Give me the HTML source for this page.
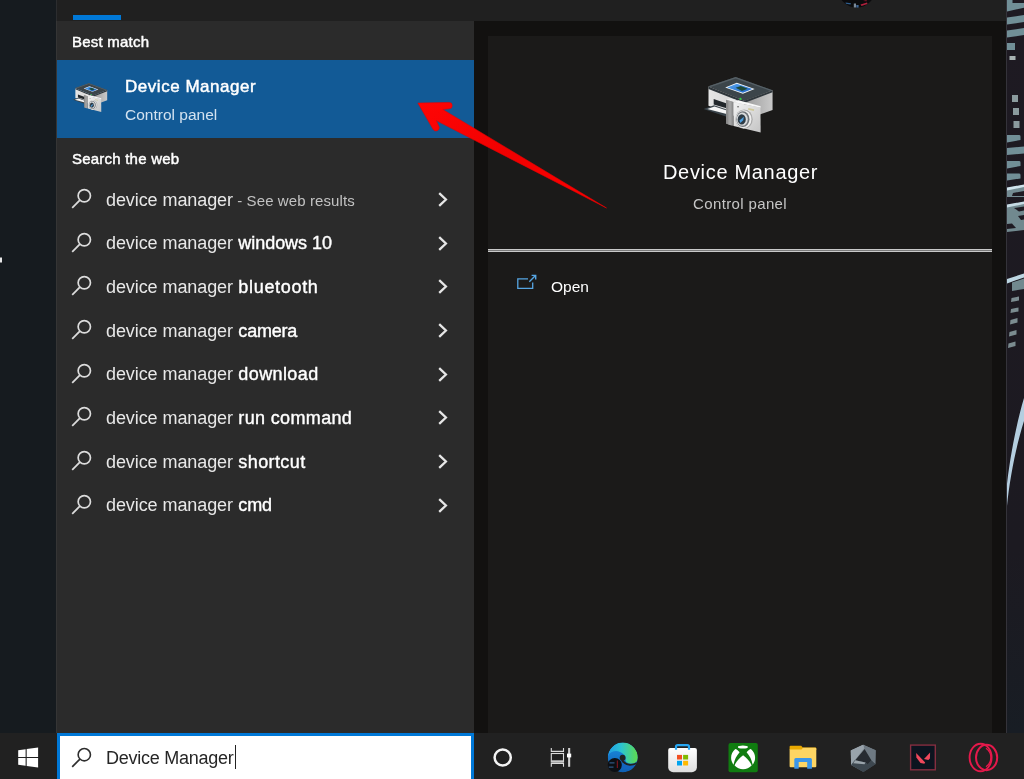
<!DOCTYPE html>
<html lang="en">
<head>
<meta charset="utf-8">
<title>Device Manager - Search</title>
<style>
html,body{margin:0;padding:0;}
body{width:1024px;height:779px;overflow:hidden;position:relative;background:#161b1f;font-family:"Liberation Sans",sans-serif;color:#fff;}
.abs{position:absolute;}
#topstrip{left:56px;top:0;width:950px;height:21px;background:#202020;border-left:1px solid #2c2d2f;box-sizing:border-box;}
#tab{left:72.5px;top:15px;width:48.5px;height:5.4px;background:#0078d7;}
#leftpanel{left:56px;top:21px;width:418px;height:712px;background:#2b2b2b;border-left:1px solid #353535;box-sizing:border-box;}
#gap{left:474px;top:21px;width:532px;height:712px;background:#121110;}
#rightpanel{left:488px;top:36px;width:504px;height:697px;background:#1b1a19;}
#selrow{left:57px;top:60px;width:417px;height:78px;background:#125a96;}
.t{position:absolute;white-space:nowrap;line-height:1;will-change:transform;}
.hdr{font-weight:normal;font-size:15px;color:#fff;-webkit-text-stroke:.45px #fff;letter-spacing:.22px;}
.row{font-size:18px;color:#e8e8e8;}
.row .rg{letter-spacing:-.08px;}
.row b{color:#fff;font-weight:normal;-webkit-text-stroke:.4px #fff;}
.sub{font-size:15px;color:#c2c2c2;letter-spacing:.1px;}
#taskbar{left:0;top:733px;width:1024px;height:46px;background:#212121;}
#searchbox{left:57px;top:733px;width:411px;height:46px;border:3px solid #0078d7;border-bottom:none;background:#fff;}
#divider{left:488px;top:249px;width:504px;height:1px;background:#7a7a7a;border-top:1px solid #c9c9c9;border-bottom:1px solid #c9c9c9;}
svg{position:absolute;overflow:visible;}
</style>
</head>
<body>
<svg id="wall" style="left:0;top:0" width="1024" height="779" viewBox="0 0 1024 779">
<defs><linearGradient id="wg" x1="0" y1="0" x2="0" y2="1"><stop offset="0" stop-color="#1e1a22"/><stop offset=".75" stop-color="#1c1a21"/><stop offset="1" stop-color="#181d24"/></linearGradient></defs>
<rect x="1006" y="0" width="18" height="733" fill="url(#wg)"/>
<rect x="1006" y="0" width="1" height="733" fill="#34333a"/>
<rect x="0" y="257.5" width="2" height="5" fill="#e8e8e8"/>
<g fill="#718f97">
<path d="M1007 0H1012.500V3H1024V7.700L1007 11.500Z"/>
<path d="M1007 17.5L1024 15V22L1007 24.5Z"/>
<path d="M1007 30.5L1024 28V35L1007 37.5Z"/>
<rect x="1007" y="43" width="8" height="7"/>
<rect x="1009.5" y="56" width="6" height="4" fill="#a9b3b3"/>
<rect x="1012" y="95" width="6" height="7" fill="#8b9b9e"/>
<rect x="1013" y="108" width="6" height="7" fill="#8b9b9e"/>
<rect x="1013.5" y="121" width="6" height="7" fill="#8b9b9e"/>
<path d="M1007 135H1019a1.5 1.5 0 0 1 1.5 1.5V140L1007 142.5Z"/>
<path d="M1007 148L1024 146.5V153.5L1007 155Z"/>
<path d="M1007 161H1019a1.5 1.5 0 0 1 1.5 1.5V166L1007 168.5Z"/>
<path d="M1007 173.5H1019a1.5 1.5 0 0 1 1.5 1.5V178.5L1007 180.5Z"/>
<path d="M1007 188L1024 185V197H1007Z" fill="#748c93"/>
<path d="M1007 187.5L1024 184.5V187L1007 190.5Z" fill="#cfe3ec"/>
<path d="M1013 193L1024 191V196H1012Z" fill="#1e1a22"/>
<path d="M1007 205L1024 202V230L1007 232Z" fill="#71898f"/>
<path d="M1007 204.5L1024 201.5V204L1007 207.5Z" fill="#c5dbe4"/>
<path d="M1014 208L1024 206.5V210.5L1019 211.5Z" fill="#1e1a22"/>
<path d="M1018 216L1024 215V219.5L1021 220Z" fill="#1e1a22"/>
<path d="M1007 224L1012 223.5L1016 228L1007 229Z" fill="#1e1a22"/>
<path d="M1007 279L1024 273.5V277.5L1007 283.5Z" fill="#bcd6e2"/>
<path d="M1012 282.5L1024 278.5V289L1012 291Z" fill="#71898f"/>
<path d="M1011.5 298L1019 296.5V300.5L1011 302Z" fill="#7b8c90"/>
<path d="M1011 309L1018.500 307.500V311.500L1010.500 313Z" fill="#7b8c90"/>
<path d="M1010.500 320L1017.500 318V322.500L1010 324.500Z" fill="#7b8c90"/>
<path d="M1009.500 332L1016.500 330V334.500L1009 336.500Z" fill="#7b8c90"/>
<path d="M1008.500 343.500L1015.500 341.500V346L1008 348Z" fill="#7b8c90"/>
<path d="M1024 398C1018 418 1011 450 1007 484V506C1009.500 480 1016 446 1024 421Z" fill="#b4cee0"/>
</g>

</svg>

<div class="abs" id="topstrip"></div>
<div class="abs" id="tab"></div>
<div class="abs" id="leftpanel"></div>
<div class="abs" id="gap"></div>
<div class="abs" id="rightpanel"></div>
<div class="abs" id="selrow"></div>
<div class="abs" id="divider"></div>

<div class="t hdr" id="t_best" style="left:72px;top:34.4px;">Best match</div>
<div class="t" id="t_dm" style="left:125px;top:77.5px;font-size:17px;-webkit-text-stroke:.45px #fff;letter-spacing:.53px;">Device Manager</div>
<div class="t" id="t_cp" style="left:125px;top:107px;font-size:15.5px;color:#d3e2f0;">Control panel</div>
<div class="t hdr" id="t_web" style="left:72px;top:150.5px;">Search the web</div>

<div class="t row" id="r1" style="left:106px;top:190.6px;"><span class="rg">device manager</span><span class="sub"> - See web results</span></div>
<svg style="left:70px;top:186.0px" width="24" height="24" viewBox="0 0 24 24"><circle cx="14.3" cy="9.75" r="6.15" fill="none" stroke="#dcdcdc" stroke-width="1.7"/><path d="M9.9 14.1 L2.2 21.8" stroke="#dcdcdc" stroke-width="1.8" fill="none"/></svg>
<svg style="left:436px;top:190.0px" width="14" height="18" viewBox="0 0 14 18"><path d="M3.2 3.2 L9.9 9.5 L3.2 15.8" stroke="#e6e6e6" stroke-width="2.3" fill="none"/></svg>
<div class="t row" id="r2" style="left:106px;top:233.6px;"><span class="rg">device manager</span> <b style="letter-spacing:-0.05px;margin-left:.35px">windows 10</b></div>
<svg style="left:70px;top:229.7px" width="24" height="24" viewBox="0 0 24 24"><circle cx="14.3" cy="9.75" r="6.15" fill="none" stroke="#dcdcdc" stroke-width="1.7"/><path d="M9.9 14.1 L2.2 21.8" stroke="#dcdcdc" stroke-width="1.8" fill="none"/></svg>
<svg style="left:436px;top:233.7px" width="14" height="18" viewBox="0 0 14 18"><path d="M3.2 3.2 L9.9 9.5 L3.2 15.8" stroke="#e6e6e6" stroke-width="2.3" fill="none"/></svg>
<div class="t row" id="r3" style="left:106px;top:277.6px;"><span class="rg">device manager</span> <b style="letter-spacing:0.68px;margin-left:.35px">bluetooth</b></div>
<svg style="left:70px;top:273.4px" width="24" height="24" viewBox="0 0 24 24"><circle cx="14.3" cy="9.75" r="6.15" fill="none" stroke="#dcdcdc" stroke-width="1.7"/><path d="M9.9 14.1 L2.2 21.8" stroke="#dcdcdc" stroke-width="1.8" fill="none"/></svg>
<svg style="left:436px;top:277.4px" width="14" height="18" viewBox="0 0 14 18"><path d="M3.2 3.2 L9.9 9.5 L3.2 15.8" stroke="#e6e6e6" stroke-width="2.3" fill="none"/></svg>
<div class="t row" id="r4" style="left:106px;top:321.6px;"><span class="rg">device manager</span> <b style="letter-spacing:-0.2px;margin-left:.35px">camera</b></div>
<svg style="left:70px;top:317.0px" width="24" height="24" viewBox="0 0 24 24"><circle cx="14.3" cy="9.75" r="6.15" fill="none" stroke="#dcdcdc" stroke-width="1.7"/><path d="M9.9 14.1 L2.2 21.8" stroke="#dcdcdc" stroke-width="1.8" fill="none"/></svg>
<svg style="left:436px;top:321.0px" width="14" height="18" viewBox="0 0 14 18"><path d="M3.2 3.2 L9.9 9.5 L3.2 15.8" stroke="#e6e6e6" stroke-width="2.3" fill="none"/></svg>
<div class="t row" id="r5" style="left:106px;top:364.6px;"><span class="rg">device manager</span> <b style="letter-spacing:0.4px;margin-left:.35px">download</b></div>
<svg style="left:70px;top:360.7px" width="24" height="24" viewBox="0 0 24 24"><circle cx="14.3" cy="9.75" r="6.15" fill="none" stroke="#dcdcdc" stroke-width="1.7"/><path d="M9.9 14.1 L2.2 21.8" stroke="#dcdcdc" stroke-width="1.8" fill="none"/></svg>
<svg style="left:436px;top:364.7px" width="14" height="18" viewBox="0 0 14 18"><path d="M3.2 3.2 L9.9 9.5 L3.2 15.8" stroke="#e6e6e6" stroke-width="2.3" fill="none"/></svg>
<div class="t row" id="r6" style="left:106px;top:408.6px;"><span class="rg">device manager</span> <b style="letter-spacing:0.35px;margin-left:.35px">run command</b></div>
<svg style="left:70px;top:404.4px" width="24" height="24" viewBox="0 0 24 24"><circle cx="14.3" cy="9.75" r="6.15" fill="none" stroke="#dcdcdc" stroke-width="1.7"/><path d="M9.9 14.1 L2.2 21.8" stroke="#dcdcdc" stroke-width="1.8" fill="none"/></svg>
<svg style="left:436px;top:408.4px" width="14" height="18" viewBox="0 0 14 18"><path d="M3.2 3.2 L9.9 9.5 L3.2 15.8" stroke="#e6e6e6" stroke-width="2.3" fill="none"/></svg>
<div class="t row" id="r7" style="left:106px;top:452.6px;"><span class="rg">device manager</span> <b style="letter-spacing:0.4px;margin-left:.35px">shortcut</b></div>
<svg style="left:70px;top:448.1px" width="24" height="24" viewBox="0 0 24 24"><circle cx="14.3" cy="9.75" r="6.15" fill="none" stroke="#dcdcdc" stroke-width="1.7"/><path d="M9.9 14.1 L2.2 21.8" stroke="#dcdcdc" stroke-width="1.8" fill="none"/></svg>
<svg style="left:436px;top:452.1px" width="14" height="18" viewBox="0 0 14 18"><path d="M3.2 3.2 L9.9 9.5 L3.2 15.8" stroke="#e6e6e6" stroke-width="2.3" fill="none"/></svg>
<div class="t row" id="r8" style="left:106px;top:495.6px;"><span class="rg">device manager</span> <b style="letter-spacing:-0.1px;margin-left:.35px">cmd</b></div>
<svg style="left:70px;top:491.8px" width="24" height="24" viewBox="0 0 24 24"><circle cx="14.3" cy="9.75" r="6.15" fill="none" stroke="#dcdcdc" stroke-width="1.7"/><path d="M9.9 14.1 L2.2 21.8" stroke="#dcdcdc" stroke-width="1.8" fill="none"/></svg>
<svg style="left:436px;top:495.8px" width="14" height="18" viewBox="0 0 14 18"><path d="M3.2 3.2 L9.9 9.5 L3.2 15.8" stroke="#e6e6e6" stroke-width="2.3" fill="none"/></svg>

<div class="t" id="t_dm2" style="left:662.8px;top:162px;font-size:20px;color:#fff;letter-spacing:.68px;">Device Manager</div>
<div class="t" id="t_cp2" style="left:693px;top:196px;font-size:15px;color:#c6c6c6;letter-spacing:.37px;">Control panel</div>
<div class="t" id="t_open" style="left:551px;top:278.8px;font-size:15.5px;color:#fff;">Open</div>

<svg id="ov" style="left:0;top:0;z-index:5" width="1024" height="779" viewBox="0 0 1024 779">
<defs>
<linearGradient id="ar" x1="0" y1="0" x2="1" y2="1"><stop offset="0" stop-color="#ff0505"/><stop offset=".5" stop-color="#f00000"/><stop offset="1" stop-color="#ff0000"/></linearGradient>
<linearGradient id="pr" x1="0" y1="0" x2="1" y2="0"><stop offset="0" stop-color="#9a9a9a"/><stop offset="1" stop-color="#c9c9c9"/></linearGradient>
<linearGradient id="pl" x1="0" y1="0" x2="1" y2="0"><stop offset="0" stop-color="#e6e6e6"/><stop offset="1" stop-color="#cfcfcf"/></linearGradient>
<linearGradient id="cb" x1="0" y1="0" x2="1" y2="1"><stop offset="0" stop-color="#f2f2f2"/><stop offset="1" stop-color="#c4c4c4"/></linearGradient>
<linearGradient id="ph" x1="0" y1="0" x2="1" y2="1"><stop offset="0" stop-color="#58a6f0"/><stop offset="1" stop-color="#1c62c4"/></linearGradient>
<g id="dmicon">
<path d="M160 228L395 147L715 262L470 352Z" fill="#3c454a"/>
<path d="M160 228L395 147L715 262L700 268L395 160L178 234Z" fill="#566066"/>
<path d="M160 230L470 352V520L160 395Z" fill="url(#pl)"/>
<path d="M470 352L715 262V432L470 520Z" fill="url(#pr)"/>
<path d="M160 230L470 352L715 262V280L470 372L160 250Z" fill="#2f373c"/>
<path d="M205 337L325 378V420L205 385Z" fill="#22272b"/>
<path d="M118 425L208 392L330 432V495Z" fill="#39434a"/>
<path d="M150 424L212 402L325 440V470Z" fill="#f6f6f6"/>
<path d="M305 237L405 197L560 252L458 292Z" fill="#f4f8fb"/>
<path d="M322 237L405 205L540 252L458 284Z" fill="url(#ph)"/>
<path d="M395 240L440 225L500 248L450 268Z" fill="#1d4a3a"/>
<circle cx="437" cy="337" r="10" fill="#30d048"/>
<path d="M312 345L346 330L402 346L378 364Z" fill="#ececec"/>
<path d="M312 345L378 364V572L312 552Z" fill="#8d8d8d"/>
<path d="M332 352L360 360V566L332 558Z" fill="#a4a4a4"/>
<path d="M378 364L420 349L612 400L610 414Z" fill="#f7f7f7"/>
<path d="M378 366L610 412L612 628L378 572Z" fill="url(#cb)"/>
<path d="M505 416L556 427L553 442L503 430Z" fill="#cfc89a"/>
<circle cx="416" cy="405" r="7" fill="#555"/>
<ellipse cx="468" cy="512" rx="75" ry="84" fill="#a9a9a9"/>
<ellipse cx="464" cy="512" rx="68" ry="78" fill="#efefef"/>
<ellipse cx="458" cy="512" rx="57" ry="68" fill="#70757a"/>
<ellipse cx="453" cy="512" rx="47" ry="58" fill="#d9dbdd"/>
<ellipse cx="448" cy="514" rx="35" ry="45" fill="#2e3b45"/>
<path d="M428 524L466 492L461 522L436 546Z" fill="#4d9fe0"/>
</g>
</defs>
<!-- large device manager icon -->
<svg x="690" y="60" width="100" height="90" viewBox="0 0 866 779"><use href="#dmicon"/></svg>
<!-- small device manager icon -->
<svg x="66.200" y="74.400" width="49.650" height="46.580" viewBox="0 0 866 779" preserveAspectRatio="none"><use href="#dmicon"/></svg>
<!-- avatar --><g id="avatar"><circle cx="856.700" cy="-11.200" r="18.800" fill="#0b0b0d"/>
<path d="M845.500 2.500L851 3.200L850.500 4.500L846 3.800Z" fill="#2f5f8f"/><rect x="853.800" y="3.500" width="2.200" height="4" fill="#7c8a98"/><rect x="856.300" y="5" width="2.300" height="2.600" fill="#3f6796"/>
<path d="M860.500 4.500L867 2.500L867.500 4L861.500 6Z" fill="#b0203c"/><path d="M863 1L866.500 0L866.800 1.200Z" fill="#8a1a2c"/></g>
<!-- open icon -->
<path d="M528 278.800H517.800V288.400H532.700V282.600" fill="none" stroke="#56a5e2" stroke-width="1.300"/>
<path d="M529.300 281.800L535.500 275.600M531.600 275.400H535.700V279.600" fill="none" stroke="#56a5e2" stroke-width="1.400"/>
<!-- red arrow -->
<path d="M417.900 103.100L449 102.400A3.200 3.200 0 0 1 449 108.800L442.800 109.500L606.500 208L436.300 120.600L439.300 127.200A3.400 3.400 0 0 1 433.200 129.600Z" fill="url(#ar)" stroke="#e80000" stroke-width=".6" stroke-linejoin="round"/>
</svg>


<div class="abs" id="taskbar"></div>
<div class="abs" id="searchbox"></div>
<div class="t" id="t_input" style="left:106px;top:749.3px;font-size:18px;color:#262626;letter-spacing:-.26px;">Device Manager</div>
<div class="abs" style="left:234.6px;top:745px;width:1.2px;height:24px;background:#222;"></div>
<svg id="tb" style="left:0;top:0;z-index:6" width="1024" height="779" viewBox="0 0 1024 779">
<defs>
<linearGradient id="eg1" x1="0" y1="0" x2="1" y2="0"><stop offset="0" stop-color="#1f9be6"/><stop offset=".45" stop-color="#2cc3d0"/><stop offset="1" stop-color="#5fdc4c"/></linearGradient>
<linearGradient id="eg2" x1="0" y1="0" x2="0" y2="1"><stop offset="0" stop-color="#1b8fe2"/><stop offset="1" stop-color="#0f5fb4"/></linearGradient>
<linearGradient id="bag" x1="0" y1="0" x2="0" y2="1"><stop offset="0" stop-color="#ffffff"/><stop offset="1" stop-color="#dedede"/></linearGradient>
<linearGradient id="hx" x1="0" y1="0" x2="1" y2="1"><stop offset="0" stop-color="#b4bec6"/><stop offset=".5" stop-color="#6d7880"/><stop offset="1" stop-color="#353e45"/></linearGradient>
<clipPath id="ec"><circle cx="622.800" cy="757.500" r="15"/></clipPath>
</defs>
<!-- windows logo -->
<g fill="#ffffff">
<path d="M18.200 750.300L25.600 749.300V757H18.200Z"/>
<path d="M26.700 749.100L38.100 747.600V757H26.700Z"/>
<path d="M18.200 758.100H25.600V765.700L18.200 764.700Z"/>
<path d="M26.700 758.100H38.100V767.400L26.700 765.900Z"/>
</g>
<!-- search box magnifier -->
<circle cx="84.300" cy="754.700" r="6.150" fill="none" stroke="#2e2e2e" stroke-width="1.600"/>
<path d="M79.900 759.100L72.200 766.800" stroke="#2e2e2e" stroke-width="1.700" fill="none"/>
<!-- cortana -->
<circle cx="502.700" cy="757.500" r="8.100" fill="none" stroke="#f4f4f4" stroke-width="2.500"/>
<!-- task view -->
<g fill="none" stroke="#dcdcdc" stroke-width="1.100">
<path d="M551.300 748V751.400H563.500V748"/>
<path d="M551.300 766.800V763.400H563.500V766.800"/>
<rect x="551.300" y="753.500" width="12.200" height="8.400"/>
<path d="M551.300 761.300H563.500" stroke-width="2" stroke="#c9c9c9"/>
</g>
<rect x="568.100" y="748" width="2.100" height="18.800" fill="#cfcfcf"/>
<rect x="567" y="753.600" width="4.200" height="3.800" fill="#ffffff"/>
<!-- edge -->
<g clip-path="url(#ec)">
<circle cx="622.800" cy="757.500" r="15" fill="url(#eg2)"/>
<path d="M607.800 757.500A15 15 0 0 1 637.800 757.500C637.800 761 636 763.600 631 763.600C628 763.600 625.600 762 625.600 760.500C625.600 759.500 626.200 758.800 625.600 757C625 754.500 622 753 620 752C616 750 611 751.500 608.300 755Z" fill="url(#eg1)"/>
<path d="M623 759.500C626 764.600 632 765 636.500 762.300L639 766C633 767.400 624.500 766.500 621 760.500Z" fill="#212121"/>
<circle cx="622.600" cy="757.700" r="2.900" fill="#212121"/>
<path d="M617 762C619 768 626 770.500 632 768C634 767 635.500 765.800 636.500 764.300C631 767 622 766 619.500 759.500Z" fill="#1464be"/>
</g>
<circle cx="614.800" cy="765" r="7" fill="#0c0f14"/>
<path d="M609.500 762.200H614.500V763.400H609.500ZM608.800 766.600H613.500V767.800H608.800Z" fill="#2f5680"/>
<rect x="616.800" y="760.500" width="1" height="7.500" fill="#8e1620"/>
<!-- store -->
<path d="M670.200 748.100H694.900A2 2 0 0 1 696.900 750.100V767.200A5 5 0 0 1 691.900 772.200H673.200A5 5 0 0 1 668.200 767.200V750.100A2 2 0 0 1 670.200 748.100Z" fill="url(#bag)"/>
<path d="M676 749.800V746.800A1.600 1.600 0 0 1 677.600 745.200H687.400A1.600 1.600 0 0 1 689 746.800V749.800" fill="none" stroke="#27a6f2" stroke-width="2.200"/>
<rect x="677" y="754.900" width="5" height="4.600" fill="#f25022"/>
<rect x="683.100" y="754.900" width="5" height="4.600" fill="#7fba00"/>
<rect x="677" y="760.800" width="5" height="4.700" fill="#00a4ef"/>
<rect x="683.100" y="760.800" width="5" height="4.700" fill="#ffb900"/>
<!-- xbox -->
<rect x="728.500" y="742.900" width="29.300" height="29.300" rx="2" fill="#107c10"/>
<g fill="#ffffff">
<ellipse cx="742.900" cy="747.100" rx="5" ry="1.500"/>
<path d="M735.300 749.100C732.500 751.500 731.100 754.500 731.100 757.800C731.100 760.500 732 762.800 733.700 764.700C734 760.500 736.500 755.800 739.600 752.300C738 750.500 736.500 749.300 735.300 749.100Z"/>
<path d="M750.900 749.100C753.700 751.500 755.100 754.500 755.100 757.800C755.100 760.500 754.200 762.800 752.500 764.700C752.200 760.500 749.700 755.800 746.600 752.300C748.200 750.500 749.700 749.300 750.900 749.100Z"/>
<path d="M743.100 755.300C739 758.500 735.500 762.500 734.600 765.600C736.800 768 739.800 769.300 743.100 769.300C746.400 769.300 749.400 768 751.600 765.600C750.700 762.500 747.200 758.500 743.100 755.300Z"/>
</g>
<!-- explorer -->
<path d="M789.600 746.800A1 1 0 0 1 790.600 745.800H801.200L802.800 747.600H815.300A1 1 0 0 1 816.300 748.600V750H789.600Z" fill="#e8a800"/>
<path d="M789.600 749.600H801.500L803 747.700H815.300A1 1 0 0 1 816.300 748.700V766.200A1 1 0 0 1 815.300 767.200H790.600A1 1 0 0 1 789.600 766.200Z" fill="#fdd563"/>
<path d="M794.300 759.600A1.500 1.500 0 0 1 795.800 758.100H810.400A1.500 1.500 0 0 1 811.900 759.600V768.700H807.200V762H798.700V768.700H794.300Z" fill="#3c96e8"/>
<!-- hex app -->
<path d="M863.100 744.700L875.700 750.200L875.400 764.300L863.400 771.900L851.100 764.900L850.800 750.500Z" fill="url(#hx)"/>
<path d="M863.100 744.700L875.700 750.200L875.400 764.300L871.300 760.200L864.600 749.100Z" fill="#6e7982"/>
<path d="M850.800 750.500L863.100 744.700L864 748L855 760L851.100 764.900Z" fill="#98a3ab"/>
<path d="M851.100 764.900L855 760L865.500 762.500L867.800 764.300L871.300 760.200L875.400 764.300L863.400 771.900Z" fill="#3d474f"/>
<path d="M864.600 749.100L871.300 760.200L867.800 764.300L865.500 762.500L855.200 760.200Z" fill="#262b31"/>
<path d="M855.200 760.200L865.500 762.500L864.500 764.300L853.200 763.300Z" fill="#9aa4ab"/>
<!-- valorant -->
<rect x="910.600" y="745.100" width="24.700" height="24.700" fill="#0c141f" stroke="#842e40" stroke-width="1.400"/>
<path d="M916.100 752.900L925.200 762.500L924.300 763.700L920.500 763.100L916.400 757.600Z" fill="#f0485c"/>
<path d="M930.100 752.600L929.900 758.400L928.400 759.900L924 759Z" fill="#f0485c"/>
<!-- opera gx -->
<ellipse cx="980.600" cy="757.500" rx="11" ry="13.800" fill="none" stroke="#e5194b" stroke-width="1.900"/>
<ellipse cx="986.600" cy="757.500" rx="10.600" ry="12.700" fill="none" stroke="#e5194b" stroke-width="2"/>
<path d="M986 748.200C992.500 753 992.500 762 986 766.800" fill="none" stroke="#e5194b" stroke-width="1.200"/>
</svg>

</body>
</html>
